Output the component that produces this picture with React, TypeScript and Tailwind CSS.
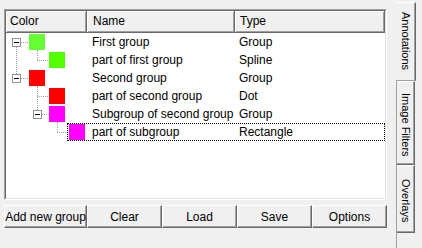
import React from "react";

interface Row {
  name: string;
  type: string;
  color: string;
  indent: number; // left of colour square, px inside the Color column
  lines: string; // dotted tree connectors
  box?: number; // x of expander box
  selected?: boolean;
}

const rows: Row[] = [
  { name: "First group", type: "Group", color: "#66ff33", indent: 23, lines: "M15 9.5H23 M10.5 14V18 M31.5 17V18", box: 6 },
  { name: "part of first group", type: "Spline", color: "#55ff00", indent: 43, lines: "M10.5 0V18 M31.5 0V9 M31 9.5H43" },
  { name: "Second group", type: "Group", color: "#ff0000", indent: 23, lines: "M10.5 0V5 M15 9.5H23 M31.5 17V18", box: 6 },
  { name: "part of second group", type: "Dot", color: "#ff0000", indent: 43, lines: "M31.5 0V18 M31 9.5H43" },
  { name: "Subgroup of second group", type: "Group", color: "#ff00ff", indent: 43, lines: "M31.5 0V5 M36 9.5H43 M51.5 17V18", box: 27 },
  { name: "part of subgroup", type: "Rectangle", color: "#ff00ff", indent: 63, lines: "M51.5 0V9 M51 9.5H63", selected: true },
];

const buttons = [
  { label: "Add new group", w: "w-[83px]" },
  { label: "Clear", w: "w-[75px]" },
  { label: "Load", w: "w-[75px]" },
  { label: "Save", w: "w-[75px]" },
  { label: "Options", w: "w-[75px]" },
];

const font = "font-['Liberation_Sans',Arial,sans-serif]";

const TreeLines: React.FC<{ row: Row }> = ({ row }) => (
  <svg width="81" height="18" className="absolute inset-0" shapeRendering="crispEdges">
    <path d={row.lines} stroke="#a0a0a0" strokeDasharray="1 1" fill="none" />
    {row.box !== undefined && (
      <g>
        <rect x={row.box + 0.5} y="5.5" width="8" height="8" fill="#fff" stroke="#919191" />
        <path d={`M${row.box + 2} 9.5H${row.box + 7}`} stroke="#000" />
      </g>
    )}
  </svg>
);

export default function App() {
  return (
    <div className={`w-[422px] h-[248px] bg-[#f0f0f0] flex ${font} text-[12px] text-black`}>
      {/* Annotations page */}
      <div className="w-[396px] pl-1 pt-[9px] flex flex-col">
        <div className="w-[383px] h-[191px] border border-t-[#a0a0a0] border-l-[#a0a0a0] border-r-white border-b-white">
          <div className="h-full border border-t-[#696969] border-l-[#696969] border-r-[#e3e3e3] border-b-[#e3e3e3] bg-white flex flex-col">
            {/* Header */}
            <div className="flex h-[22px] bg-[#f0f0f0]">
              <div className="w-[81px] pl-1 leading-[21px] border-r border-b border-[#696969] shadow-[inset_1px_1px_0_#fff,inset_-1px_-1px_0_#a0a0a0]">
                Color
              </div>
              <div className="w-[148px] pl-[6px] leading-[21px] border-r border-b border-[#696969] shadow-[inset_1px_1px_0_#fff,inset_-1px_-1px_0_#a0a0a0]">
                Name
              </div>
              <div className="w-[150px] pl-[5px] leading-[21px] border-r border-b border-[#696969] shadow-[inset_1px_1px_0_#fff,inset_-1px_-1px_0_#a0a0a0]">
                Type
              </div>
            </div>

            {/* Rows */}
            {rows.map((row) => (
              <div key={row.name} className="relative flex h-[18px] leading-[19px]">
                <div className="relative w-[81px] shrink-0">
                  <TreeLines row={row} />
                  <div
                    className="absolute top-[1px] w-4 h-4"
                    style={{ left: row.indent, backgroundColor: row.color }}
                  />
                </div>
                <div className="w-[148px] pl-[5px] whitespace-nowrap">{row.name}</div>
                <div className="w-[150px] pl-[4px]">{row.type}</div>
                {row.selected && (
                  <div className="absolute left-[61px] right-0 top-0 bottom-0 border border-dotted border-black" />
                )}
              </div>
            ))}
          </div>
        </div>

        {/* Buttons */}
        <div className="flex mt-[5px] h-[23px]">
          {buttons.map((b) => (
            <button
              key={b.label}
              className={`${b.w} h-full whitespace-nowrap bg-[#f0f0f0] text-center border border-t-white border-l-white border-r-[#696969] border-b-[#696969] shadow-[inset_-1px_-1px_0_#a0a0a0]`}
            >
              {b.label}
            </button>
          ))}
        </div>
      </div>

      {/* Tabs on the east side */}
      <div className="w-[26px] flex flex-col pt-[2px] text-[11px]">
        <div className="w-[20px] h-[79px] bg-[#f0f0f0] border-t border-t-white border-r border-r-[#696969] border-b border-b-[#a0a0a0] shadow-[inset_-1px_0_0_#a0a0a0] flex items-start justify-center pt-[9px]">
          <span className="[writing-mode:vertical-rl] leading-[18px]">Annotations</span>
        </div>
        <div className="w-[19px] h-[84px] border-l border-l-[#a0a0a0] flex">
          <div className="w-[18px] h-full border-t border-t-white border-r border-r-[#696969] border-b border-b-[#696969] shadow-[inset_-1px_-1px_0_#a0a0a0] flex items-start justify-center pt-[11px]">
            <span className="[writing-mode:vertical-rl] leading-[16px]">Image Filters</span>
          </div>
        </div>
        <div className="w-[19px] h-[68px] border-l border-l-[#a0a0a0] flex">
          <div className="w-[18px] h-full border-t border-t-white border-r border-r-[#696969] border-b border-b-[#696969] shadow-[inset_-1px_-1px_0_#a0a0a0] flex items-start justify-center pt-[13px]">
            <span className="[writing-mode:vertical-rl] leading-[16px]">Overlays</span>
          </div>
        </div>
        <div className="flex-1 w-[19px] border-l border-l-[#a0a0a0]" />
      </div>
    </div>
  );
}
